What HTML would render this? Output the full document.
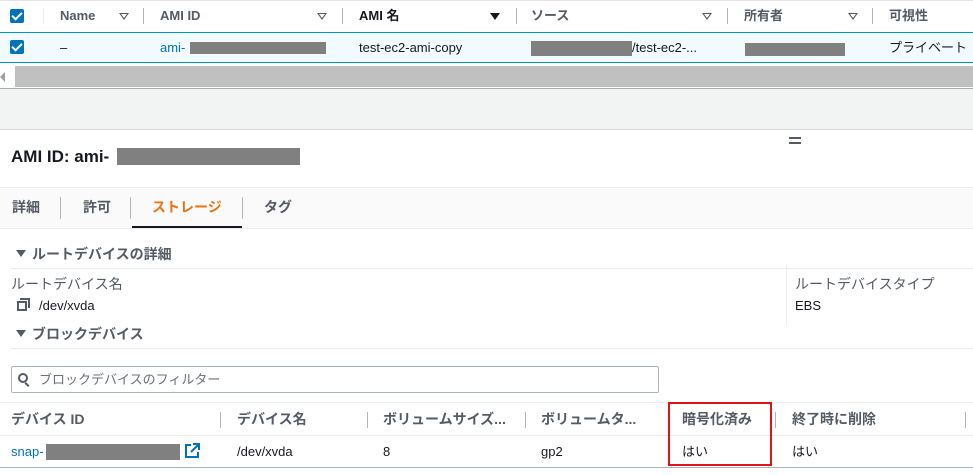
<!DOCTYPE html>
<html><head><meta charset="utf-8"><style>
*{margin:0;padding:0;box-sizing:border-box}
body{width:973px;height:475px;overflow:hidden;background:#fff;font-family:"Liberation Sans","Noto Sans CJK JP",sans-serif;font-size:13px;color:#16191f;position:relative}
.a{position:absolute;white-space:nowrap;line-height:16px}
.h{font-weight:bold;color:#545b64}
.g{background:#808080;position:absolute}
.sep{position:absolute;width:1px;background:#aab7b8}
.cb{position:absolute;width:14px;height:14px;background:#0073bb;border-radius:2px}
.cb:after{content:"";position:absolute;left:4px;top:1px;width:4px;height:8px;border:solid #fff;border-width:0 2px 2px 0;transform:rotate(45deg)}
.tri{position:absolute;width:0;height:0;border-left:5px solid transparent;border-right:5px solid transparent;border-top:7px solid #545b64}
.tri.o:after{content:"";position:absolute;left:-3px;top:-6px;border-left:3px solid transparent;border-right:3px solid transparent;border-top:4px solid #fff}
.st{display:inline-block;width:0;height:0;border-left:5px solid transparent;border-right:5px solid transparent;border-top:7px solid #545b64;margin-right:6px;vertical-align:2px}
.line{position:absolute;height:1px;background:#eaeded}
</style></head><body>
<div class="line" style="top:0;left:0;width:973px;background:#e5e5e5"></div>
<!-- header -->
<div class="cb" style="left:10px;top:9px"></div>
<div class="sep" style="left:43px;top:8px;height:16px;background:#eaeded"></div>
<div class="a h" style="left:60px;top:8px">Name</div><div class="tri o" style="left:119px;top:13px"></div>
<div class="sep" style="left:143px;top:8px;height:16px"></div>
<div class="a h" style="left:160px;top:8px">AMI ID</div><div class="tri o" style="left:317px;top:13px"></div>
<div class="sep" style="left:342px;top:8px;height:16px"></div>
<div class="a h" style="left:359px;top:8px;color:#16191f">AMI 名</div><div class="tri" style="left:490px;top:13px;border-top-color:#16191f"></div>
<div class="sep" style="left:516px;top:8px;height:16px"></div>
<div class="a h" style="left:531px;top:8px">ソース</div><div class="tri o" style="left:702px;top:13px"></div>
<div class="sep" style="left:727px;top:8px;height:16px"></div>
<div class="a h" style="left:744px;top:8px">所有者</div><div class="tri o" style="left:848px;top:13px"></div>
<div class="sep" style="left:872px;top:8px;height:16px"></div>
<div class="a h" style="left:889px;top:8px">可視性</div>
<!-- row -->
<div style="position:absolute;left:0;top:32px;width:973px;height:31px;background:#f1faff;border-top:1px solid #0096c8;border-bottom:1px solid #0096c8"></div>
<div class="cb" style="left:10px;top:40px"></div>
<div class="a" style="left:60px;top:40px">–</div>
<div class="a" style="left:160px;top:40px;color:#0073bb">ami-</div><div class="g" style="left:190px;top:42px;width:136px;height:12px"></div>
<div class="a" style="left:359px;top:40px">test-ec2-ami-copy</div>
<div class="g" style="left:531px;top:41px;width:101px;height:15px"></div><div class="a" style="left:632px;top:40px">/test-ec2-...</div>
<div class="g" style="left:745px;top:43px;width:100px;height:13px"></div>
<div class="a" style="left:889px;top:40px">プライベート</div>
<!-- scrollbar -->
<div style="position:absolute;left:0;top:64px;width:973px;height:25px;background:#fff"></div>
<div style="position:absolute;left:15px;top:66px;width:958px;height:21px;background:#c0c0c0"></div>
<div style="position:absolute;left:0;top:72px;border-top:5px solid transparent;border-bottom:5px solid transparent;border-right:5px solid #a0a0a0"></div>
<div style="position:absolute;left:0;top:88px;width:973px;height:42px;background:#f2f3f3;border-top:1px solid #aaa;border-bottom:1px solid #d5dbdb"></div>
<!-- title -->
<div class="a" style="left:11px;top:148px;font-size:17px;font-weight:bold;line-height:18px">AMI ID: ami-</div>
<div class="g" style="left:117px;top:148px;width:183px;height:17px"></div>
<div style="position:absolute;left:789px;top:137px;width:12px;height:2px;background:#545b64"></div>
<div style="position:absolute;left:789px;top:142px;width:12px;height:2px;background:#545b64"></div>
<!-- tabs -->
<div style="position:absolute;left:0;top:187px;width:973px;height:42px;background:#fafafa;border-top:1px solid #eaeded;border-bottom:1px solid #eaeded"></div>
<div class="a h" style="left:12px;top:199px;font-size:14px">詳細</div>
<div class="sep" style="left:60px;top:197px;height:22px;background:#aab7b8"></div>
<div class="a h" style="left:83px;top:199px;font-size:14px">許可</div>
<div class="sep" style="left:130px;top:197px;height:22px"></div>
<div class="a h" style="left:152px;top:199px;font-size:14px;color:#ec7211">ストレージ</div>
<div style="position:absolute;left:132px;top:226px;width:110px;height:2px;background:#16191f"></div>
<div class="sep" style="left:242px;top:197px;height:22px"></div>
<div class="a h" style="left:264px;top:199px;font-size:14px">タグ</div>
<!-- root device -->
<div class="a h" style="left:16px;top:246px;font-size:14px"><span class="st"></span>ルートデバイスの詳細</div>
<div class="line" style="left:11px;top:268px;width:962px"></div>
<div class="sep" style="left:786px;top:265px;height:60px;background:#eaeded"></div>
<div class="a" style="left:11px;top:276px;font-size:14px;color:#545b64">ルートデバイス名</div>
<div style="position:absolute;left:17px;top:301px;width:10px;height:10px;border:2px solid #545b64"></div>
<div style="position:absolute;left:20px;top:298px;width:10px;height:10px;border-top:2px solid #545b64;border-right:2px solid #545b64"></div>
<div class="a" style="left:39px;top:298px">/dev/xvda</div>
<div class="a" style="left:795px;top:276px;font-size:14px;color:#545b64">ルートデバイスタイプ</div>
<div class="a" style="left:795px;top:298px">EBS</div>
<div class="a h" style="left:16px;top:326px;font-size:14px"><span class="st"></span>ブロックデバイス</div>
<div class="line" style="left:11px;top:348px;width:962px"></div>
<!-- search -->
<div style="position:absolute;left:11px;top:366px;width:648px;height:27px;border:1px solid #aab7b8;border-radius:2px"></div>
<div style="position:absolute;left:18px;top:373px;width:10px;height:10px;border:2px solid #545b64;border-radius:50%"></div>
<div style="position:absolute;left:26px;top:382px;width:2px;height:5px;background:#545b64;transform:rotate(-45deg)"></div>
<div class="a" style="left:39px;top:372px;color:#687078">ブロックデバイスのフィルター</div>
<!-- table -->
<div class="line" style="left:0;top:402px;width:973px"></div>
<div class="a h" style="left:11px;top:411px;font-size:14px">デバイス ID</div>
<div class="sep" style="left:220px;top:412px;height:16px"></div>
<div class="a h" style="left:237px;top:411px;font-size:14px">デバイス名</div>
<div class="sep" style="left:367px;top:412px;height:16px"></div>
<div class="a h" style="left:383px;top:411px;font-size:14px">ボリュームサイズ...</div>
<div class="sep" style="left:525px;top:412px;height:16px"></div>
<div class="a h" style="left:541px;top:411px;font-size:14px">ボリュームタ...</div>
<div class="sep" style="left:668px;top:412px;height:16px"></div>
<div class="a h" style="left:682px;top:411px;font-size:14px">暗号化済み</div>
<div class="sep" style="left:775px;top:412px;height:16px"></div>
<div class="a h" style="left:792px;top:411px;font-size:14px">終了時に削除</div>
<div class="sep" style="left:965px;top:412px;height:16px"></div>
<div class="line" style="left:0;top:435px;width:973px"></div>
<div class="a" style="left:11px;top:444px;color:#0073bb">snap-</div>
<div class="g" style="left:46px;top:444px;width:134px;height:16px"></div>
<svg style="position:absolute;left:184px;top:443px" width="16" height="16" viewBox="0 0 16 16" fill="none" stroke="#0073bb" stroke-width="2"><path d="M7 2H2v12h12V9"/><path d="M9 1h6v6"/><path d="M15 1L7 9"/></svg>
<div class="a" style="left:237px;top:444px">/dev/xvda</div>
<div class="a" style="left:383px;top:444px">8</div>
<div class="a" style="left:541px;top:444px">gp2</div>
<div class="a" style="left:682px;top:444px">はい</div>
<div class="a" style="left:792px;top:444px">はい</div>
<div class="line" style="left:0;top:467px;width:973px;background:#aab7b8"></div>
<div style="position:absolute;left:668px;top:402px;width:104px;height:64px;border:2px solid #e0131c"></div>
</body></html>
